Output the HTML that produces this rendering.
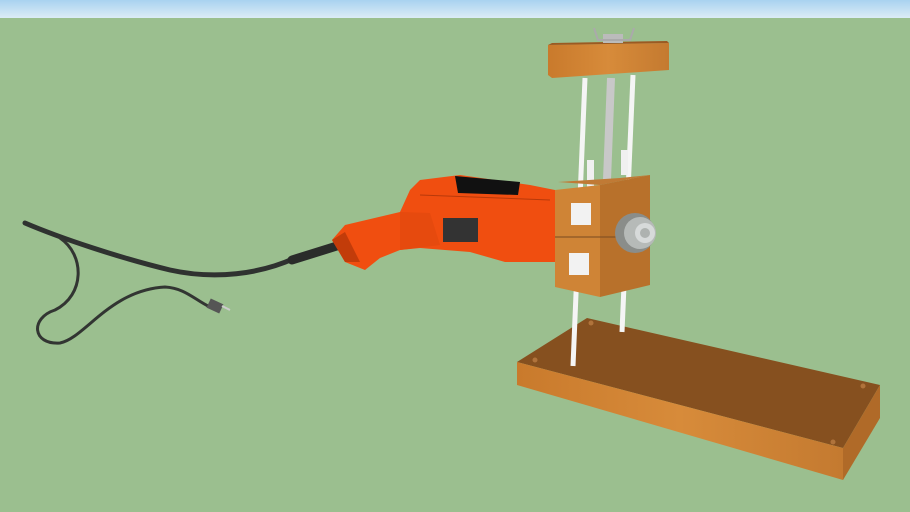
<!DOCTYPE html>
<html><head><style>
html,body{margin:0;padding:0;width:910px;height:512px;overflow:hidden;background:#9bbf8f}
svg{display:block}
</style></head><body>
<svg width="910" height="512" viewBox="0 0 910 512" xmlns="http://www.w3.org/2000/svg">
<defs>
<linearGradient id="sky" x1="0" y1="0" x2="0" y2="1"><stop offset="0" stop-color="#a9d2f0"/><stop offset="1" stop-color="#dcecf6"/></linearGradient>
<linearGradient id="wood1" x1="0" y1="0" x2="1" y2="0"><stop offset="0" stop-color="#c97a2c"/><stop offset="0.5" stop-color="#d78b3a"/><stop offset="1" stop-color="#c47a30"/></linearGradient>
</defs>
<rect width="910" height="512" fill="#9bbf8f"/>
<rect width="910" height="18" fill="url(#sky)"/>

<g fill="none" stroke-linecap="round" stroke-linejoin="round">
<path d="M25,223 C60,238 120,258 170,270 C215,280 260,274 295,258" stroke="#2f3230" stroke-width="5"/>
<path d="M60,238 C85,255 85,295 55,310 C30,318 32,345 60,343 C85,338 110,290 165,287 C185,288 195,300 210,307" stroke="#323532" stroke-width="3"/>
<path d="M292,260 L340,245" stroke="#2a2c2a" stroke-width="9"/>
</g>
<rect x="208" y="301" width="14" height="10" fill="#555" transform="rotate(25 215 306)"/>
<line x1="222" y1="306" x2="230" y2="310" stroke="#ccc" stroke-width="2"/>

<path d="M332,240 L345,225 L400,212 L410,190 L420,180 L460,175 L530,185 L555,190 L555,262 L505,262 L470,252 L420,248 L400,250 L380,258 L365,270 L345,262 Z" fill="#f04e10"/>
<path d="M400,212 L430,213 L440,245 L400,250 Z" fill="#e64a0e"/>
<path d="M455,176 L520,182 L518,195 L458,193 Z" fill="#111"/>
<rect x="443" y="218" width="35" height="24" fill="#333"/>
<path d="M332,240 L345,232 L360,262 L345,262 Z" fill="#c23c0a"/>
<path d="M420,195 L550,200" stroke="#b8390a" stroke-width="1" fill="none"/>

<polygon points="587,318 880,385 843,448 517,362" fill="#86501f"/>
<polygon points="517,362 843,448 843,480 517,385" fill="url(#wood1)"/>
<polygon points="843,448 880,385 880,418 843,480" fill="#b06a28"/>
<g fill="#b0733b"><circle cx="591" cy="323" r="2.5"/><circle cx="535" cy="360" r="2.5"/><circle cx="863" cy="386" r="2.5"/><circle cx="833" cy="442" r="2.5"/></g>

<line x1="585" y1="78" x2="573" y2="366" stroke="#f5f5f5" stroke-width="5"/>
<line x1="633" y1="75" x2="622" y2="332" stroke="#f5f5f5" stroke-width="5"/>
<line x1="611" y1="78" x2="607" y2="180" stroke="#c8c8c8" stroke-width="8"/>
<rect x="587" y="160" width="7" height="28" fill="#f0f0f0"/>
<rect x="621" y="150" width="7" height="25" fill="#f0f0f0"/>

<polygon points="548,45 669,43 669,70 552,78 548,75" fill="url(#wood1)"/>
<polygon points="548,45 669,43 667,41 552,43" fill="#9b5a22"/>
<rect x="603" y="34" width="20" height="9" fill="#bbb"/>
<path d="M594,28 L598,40 L630,40 L634,28" stroke="#aaa" stroke-width="2" fill="none"/>

<polygon points="558,182 620,178 650,175 600,185" fill="#c07a35"/>
<polygon points="555,190 600,185 600,297 555,287" fill="#cf8436"/>
<polygon points="600,185 650,175 650,285 600,297" fill="#b8712b"/>
<line x1="555" y1="237" x2="650" y2="237" stroke="#7a4a20" stroke-width="1"/>
<rect x="571" y="203" width="20" height="22" fill="#f2f2f2"/>
<rect x="569" y="253" width="20" height="22" fill="#f2f2f2"/>
<circle cx="635" cy="233" r="20" fill="#8a8d8a"/>
<circle cx="640" cy="233" r="16" fill="#b6bab8"/>
<circle cx="645" cy="233" r="10" fill="#d7dada"/>
<circle cx="645" cy="233" r="5" fill="#aeb2b0"/>
</svg>
</body></html>
